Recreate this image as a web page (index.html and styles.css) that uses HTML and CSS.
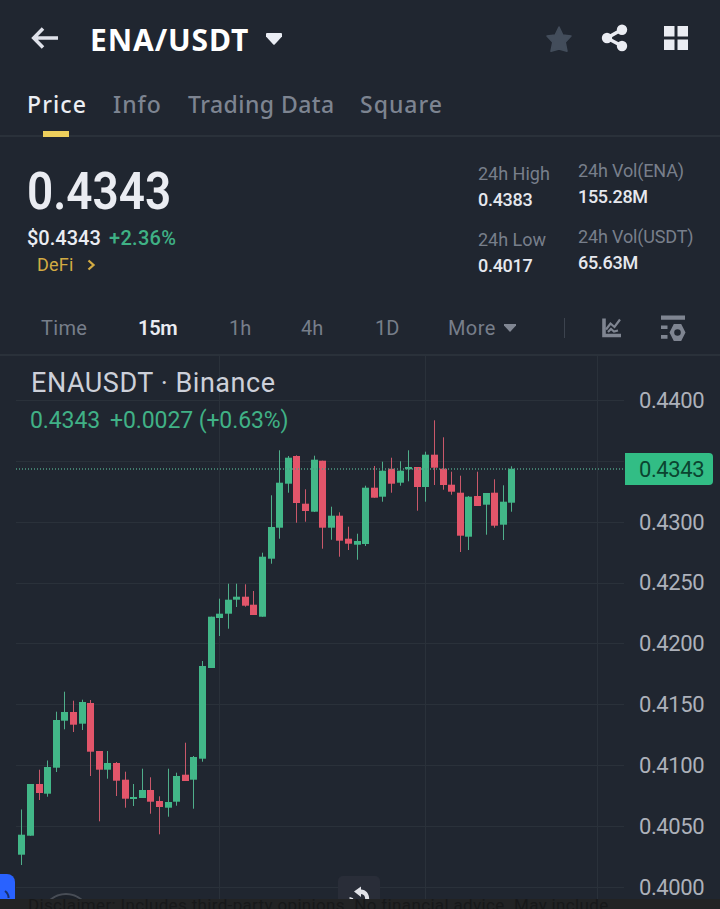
FILE: index.html
```html
<!DOCTYPE html>
<html lang="en">
<head>
<meta charset="utf-8">
<title>ENA/USDT</title>
<link rel="stylesheet" href="styles.css">
</head>
<body>
<div class="app">
  <header class="topbar">
    <svg class="back" width="28" height="24" viewBox="0 0 28 24"><path d="M13 2.500 3.700 12l9.300 9.500M4 12H28" fill="none" stroke="#dfe2ea" stroke-width="3.500"/></svg>
    <h1 class="pair">ENA/USDT</h1>
    <svg class="caret" width="18" height="14" viewBox="0 0 18 14"><path d="M2 1h14q1 0 1 1v2.500L9.700 12.500q-.7.700-1.400 0L1 4.500V2q0-1 1-1z" fill="#e9ecf3"/></svg>
    <svg class="star" width="28" height="28" viewBox="0 0 28 28"><path d="M14 2l3.800 8 8.200 1-5.800 6.200 1.800 9L14 24l-8 2.200 1.800-9L2 11l8.200-1z" fill="#434d5b" stroke="#434d5b" stroke-width="1.500" stroke-linejoin="round"/></svg>
    <svg class="share" width="28" height="28" viewBox="0 0 28 28"><path d="M21 5.500 6 14l15 8" fill="none" stroke="#eaecf2" stroke-width="3.500"/><g fill="#eaecf2"><circle cx="21" cy="5.700" r="5.200"/><circle cx="6" cy="14" r="5.200"/><circle cx="21" cy="22" r="5.200"/></g></svg>
    <svg class="apps" width="26" height="26" viewBox="0 0 26 26"><path d="M1 1h10.500v10.500H1zM14.500 1H25v10.500H14.500zM1 14.500h10.500V25H1zM14.500 14.500H25V25H14.500z" fill="#eaecf2"/></svg>
  </header>

  <nav class="tabs">
    <a class="tab tab-price active">Price</a>
    <a class="tab tab-info">Info</a>
    <a class="tab tab-data">Trading Data</a>
    <a class="tab tab-square">Square</a>
  </nav>

  <section class="summary">
    <div class="quote">
      <div class="last">0.4343</div>
      <div class="change"><span class="usd">$0.4343</span><span class="pct">+2.36%</span></div>
      <div class="tag"><span>DeFi</span><svg width="9" height="12" viewBox="0 0 9 12"><path d="M1.500 1.500 6.500 6l-5 4.500" fill="none" stroke="#d2ab43" stroke-width="2.300"/></svg></div>
    </div>
    <div class="stats low-stats">
      <div class="stat"><span class="label">24h High</span><span class="value">0.4383</span></div>
      <div class="stat"><span class="label">24h Low</span><span class="value">0.4017</span></div>
    </div>
    <div class="stats vol-stats">
      <div class="stat"><span class="label">24h Vol(ENA)</span><span class="value">155.28M</span></div>
      <div class="stat"><span class="label">24h Vol(USDT)</span><span class="value">65.63M</span></div>
    </div>
  </section>

  <nav class="intervals">
    <span class="iv-time">Time</span>
    <span class="iv-15m">15m</span>
    <span class="iv-1h">1h</span>
    <span class="iv-4h">4h</span>
    <span class="iv-1d">1D</span>
    <span class="iv-more">More</span>
    <svg class="more-caret" width="12" height="10" viewBox="0 0 12 10"><path d="M0 1h12v1.500L6 9 0 2.500z" fill="#808692"/></svg>
    <i class="sep"></i>
    <svg class="indicator" width="20" height="22" viewBox="0 0 20 22"><path d="M2 1.500v17h17" fill="none" stroke="#7f8591" stroke-width="3.600"/><path d="M4 12.500l4.500-6 4 3.500 5.500-7.500M6 15l3-3 3 2.500 4-1" fill="none" stroke="#7f8591" stroke-width="2.200"/></svg>
    <svg class="settings" width="26" height="28" viewBox="0 0 26 28"><path d="M1 1.500h24v4.300H1zM1 11.500h6.500v3.500H1zM1 21h6.500v3.800H1z" fill="#7f8591"/><path fill-rule="evenodd" d="M13.800 10h7.400L25.500 18.500l-4.300 8.500h-7.400L9.500 18.500zM17.500 15.200a3.300 3.300 0 1 0 0 6.600 3.300 3.300 0 0 0 0-6.600z" fill="#7f8591"/></svg>
  </nav>

  <main class="chart">
    <div class="plot">
      <svg id="candles" width="625" height="543" viewBox="0 356 625 543"></svg>
      <div class="legend">
        <div class="symbol">ENAUSDT · Binance</div>
        <div class="delta"><span class="d-price">0.4343</span><span class="d-change">+0.0027 (+0.63%)</span></div>
      </div>
      <i class="marker"><svg width="16" height="24" viewBox="0 0 16 24"><path d="M6 17q4 3 3.500 8" fill="none" stroke="#17306f" stroke-width="2"/></svg></i>
      <i class="logo-ring"></i>
      <div class="reset"><svg width="24" height="14" viewBox="-4 0 24 14"><path d="M1 5.500 8 .5v3c5 .2 8.200 4 8.200 9.500h-4c0-3-1.300-4.800-4.200-5v3z" fill="#e2e3e9"/><path d="M0 13l-3.500-1.200" stroke="#e2e3e9" stroke-width="1.500"/></svg></div>
    </div>
    <div class="axis">
      <span>0.4400</span>
      <span class="current">0.4343</span>
      <span>0.4300</span>
      <span>0.4250</span>
      <span>0.4200</span>
      <span>0.4150</span>
      <span>0.4100</span>
      <span>0.4050</span>
      <span>0.4000</span>
    </div>
  </main>
  <footer class="disclaimer"><span>Disclaimer: Includes third-party opinions. No financial advice. May include</span></footer>
</div>
<script src="chart.js"></script>
</body>
</html>
```
FILE: styles.css
```css
* { box-sizing: border-box; }
body { margin: 0; background: #202630; font-family: Roboto, "Liberation Sans", sans-serif; }
.app { width: 720px; height: 909px; overflow: hidden; display: flex; flex-direction: column; white-space: nowrap; }
svg { display: block; flex: none; }

.topbar { height: 80px; flex: none; display: flex; align-items: center; padding: 0 30px 4px; }
.pair { margin: 3px 0 0 32px; width: 161px; font: 700 30px/36px "Noto Sans", sans-serif; letter-spacing: 0.9px; color: #fff; }
.caret { margin-left: 14px; margin-top: 2px; }
.star { margin-left: 262px; margin-top: 2px; }
.share { margin-left: 28px; }
.apps { margin-left: 34px; }

.tabs { height: 57px; flex: none; display: flex; padding: 9px 27px 0; border-bottom: 2px solid #2a313a; font: 500 23px/30px "Noto Sans", sans-serif; color: #7d8491; }
.tab { position: relative; }
.tab.active { color: #eceef3; }
.tab.active::after { content: ""; position: absolute; left: 16px; top: 42px; width: 26px; height: 6px; background: #edcf5c; }
.tab-price { width: 86px; letter-spacing: 1.1px; }
.tab-info { width: 75px; letter-spacing: 1px; }
.tab-data { width: 172px; letter-spacing: 0.45px; }
.tab-square { letter-spacing: 1px; }

.summary { height: 163px; flex: none; display: grid; grid-template-columns: 451px 100px 1fr; padding-left: 27px; }
.quote { padding-top: 30px; }
.last { font-size: 51px; line-height: 50px; font-weight: 600; color: #eaecf2; transform: scaleX(0.9); transform-origin: left; }
.change { margin-top: 8px; display: flex; font-size: 20px; line-height: 26px; font-weight: 500; color: #eaecf2; }
.usd { width: 82px; }
.pct { color: #3fb185; letter-spacing: 0.3px; }
.tag { margin: 1px 0 0 10px; display: flex; align-items: center; gap: 14px; font-size: 18px; line-height: 26px; color: #d2ab43; letter-spacing: 0.2px; }
.low-stats { padding-top: 24px; }
.vol-stats { padding-top: 21px; }
.stat { height: 66px; display: flex; flex-direction: column; }
.label { font-size: 18px; line-height: 26px; color: #787f8b; }
.vol-stats .label { letter-spacing: -0.15px; }
.value { font-size: 18px; line-height: 26px; font-weight: 500; color: #e6e8ee; letter-spacing: -0.3px; }

.intervals { height: 56px; flex: none; display: flex; align-items: center; padding: 2px 0 0 41px; border-bottom: 2px solid #2a313a; font-size: 20px; line-height: 28px; color: #777e8a; }
.iv-time { width: 97px; letter-spacing: 0.3px; }
.iv-15m { width: 91px; font-weight: 600; color: #eaecf2; letter-spacing: -0.3px; }
.iv-1h { width: 72px; }
.iv-4h { width: 74px; }
.iv-1d { width: 73px; }
.iv-more { width: 56px; letter-spacing: 0.4px; }
.sep { width: 1px; height: 20px; margin-left: 48px; background: #3c434e; }
.indicator { margin-left: 37px; }
.settings { margin-left: 38px; }

.chart { height: 543px; flex: none; display: flex; }
.plot { position: relative; width: 625px; height: 543px; overflow: hidden; }
.legend { position: absolute; left: 31px; top: 10px; color: #cdd0d9; }
.symbol { font-size: 27px; line-height: 34px; letter-spacing: 0.53px; }
.delta { display: flex; margin-top: 5px; font-size: 23px; line-height: 32px; color: #40b186; }
.d-price { width: 80px; margin-left: -1px; letter-spacing: -0.1px; }
.d-change { letter-spacing: -0.1px; }
.marker { position: absolute; left: -8px; top: 518px; width: 23px; height: 40px; border-radius: 8px; background: #2962ff; }
.marker svg { margin-left: 7px; }
.logo-ring { position: absolute; left: 41px; top: 537px; width: 50px; height: 50px; border: 2px solid #484d56; border-radius: 50%; background: #1c2129; }
.reset { position: absolute; left: 338px; top: 520px; width: 42px; height: 40px; border-radius: 5px; background: #292d38; padding: 10px 0 0 11px; }
.axis { width: 95px; padding-top: 29px; display: flex; flex-direction: column; font-size: 22px; letter-spacing: -0.4px; line-height: 32px; color: #adb1ba; }
.axis span { height: 32px; padding-left: 14px; margin-bottom: 28.900px; }
.axis span:first-child { margin-bottom: 0; }
.axis .current { width: 88px; height: 32px; margin: 36px 0 21.500px; line-height: 33px; border-radius: 0 4px 4px 0; background: #32bd85; color: #0b4430; }
.disclaimer { height: 10px; flex: none; overflow: hidden; background: #222324; padding-left: 28px; font-size: 17px; letter-spacing: 0.34px; line-height: 12px; color: #171819; }
```
FILE: chart.js
```js
// Each candle: centre x, high, low, body top, body bottom, rising (1) or falling (0)
const candles = [
  [21.5,809.5,865,834.7,854.7,1],[30.5,784,835.7,784,835.7,1],[39.5,769.7,800,784,793,0],
  [47.5,760.5,796.7,767,793.7,1],[56.5,711.7,772,720,767.7,1],[64.5,691.7,729.3,712,720.7,1],
  [73.5,700.7,732,712,724.7,0],[82.5,699.7,730,702,723.7,1],[90.5,700,776,703,751.7,0],
  [99.5,751,821.3,751,769.7,0],[107.5,751,778.7,763,769.7,1],[116.5,762,796,763,780.7,0],
  [125.5,771.7,807.7,779.7,798.7,0],[133.5,784,806,797,799,1],[142.5,768.7,798,790,798,1],
  [150.5,777.3,813.7,790,801.7,0],[159.5,796.3,834.3,801,807,0],[168.5,768.7,816.7,802,807.7,1],
  [176.5,772.7,805.7,776,801.7,1],[185.5,742.7,781,774.7,781,0],[193.5,756,808.7,757,779.7,1],
  [202.5,661,761.7,666,758.7,1],[211.5,616.7,668,616.7,668,1],[219.5,598.7,636,613.7,618,1],
  [228.5,583.7,628.7,599.7,613.7,1],[236.5,583.7,607,596.7,599.7,1],[245.5,584.3,606.7,596.7,605.7,0],
  [253.5,591,615,604.7,615,0],[262.5,552.7,616.7,556.7,616.7,1],[271.5,495.3,563.7,527,558.7,1],
  [279.5,450.3,538.7,482.7,527.7,1],[288.5,456,492.7,457.7,483.7,1],[296.5,455.3,522.7,456,503,0],
  [305.5,489.3,521.7,503.7,511,0],[314.5,455.7,512,459.7,511.7,1],[322.5,460.7,548.7,460.7,527.7,0],
  [331.5,506.7,539.7,515.7,527.7,1],[339.5,512.3,556.7,515.7,540.7,0],[348.5,526.7,550,538.7,543.7,0],
  [357.5,533.7,559.7,541,544.7,1],[365.5,485.7,546,487.7,544,1],[374.5,466,497.7,487.7,497.7,0],
  [382.5,461.7,501.7,470.7,496.7,1],[391.5,457.7,492.7,468.7,483.7,0],[400.5,461.3,485.7,470.7,482.7,1],
  [408.5,450.3,481.3,467,469.3,1],[417.5,467,510.7,467,487,0],[425.5,451.7,501.7,454.7,487,1],
  [434.5,420.3,485,454.7,467.7,0],[443.5,437.3,489.7,468.7,485,0],[451.5,471.7,494.7,484.7,491.7,0],
  [460.5,475.7,552,492.7,535.7,0],[468.5,496,550,496.7,536.7,1],[477.5,471.7,506,496,506,0],
  [486.5,493,534.7,493,504.7,1],[494.5,479.3,527.7,492.7,525.7,0],[503.5,485.3,540,501.7,524.7,1],
  [511.5,466.3,511.7,468.7,502.7,1]
];
const svg = document.getElementById('candles');
const rect = (x, y, w, h, fill) => `<rect x="${x}" y="${y}" width="${w}" height="${h}" fill="${fill}"/>`;
let out = '';
[400, 461, 522, 583, 643, 704, 765, 826, 887].forEach(y => { out += rect(16, y, 608, 1, '#2a313a'); });
[219, 425, 597].forEach(x => { out += rect(x, 356, 1, 543, '#2a313a'); });
candles.forEach(([x, high, low, top, bottom, up]) => {
  out += rect(x - 0.5, high, 1, low - high, up ? '#4fae8a' : '#c9586a');
  out += rect(x - 3.5, top, 7, bottom - top, up ? '#42b788' : '#e2556a');
});
out += '<path d="M16 469H625" stroke="#4d9b82" stroke-width="1.400" stroke-dasharray="1 2"/>';
svg.innerHTML = out;
```
